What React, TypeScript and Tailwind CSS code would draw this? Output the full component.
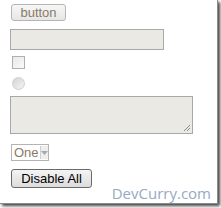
import React from "react";

export default function App() {
  return (
    <div className="w-[221px] h-[208px] bg-white relative overflow-hidden" style={{ fontFamily: "Tahoma, 'DejaVu Sans', 'Liberation Sans', sans-serif" }}>
      <div className="w-[218px] h-[204px] bg-white shadow-[2px_2px_3px_rgba(0,0,0,0.75)] border-r border-b border-[#8a8a8a] flex flex-col items-start pl-[10px]">
        <button className="mt-[4px] ml-[1px] w-[55px] h-[17px] border border-[#b5b5b5] rounded-[3px] bg-gradient-to-b from-[#f7f7f7] to-[#e6e6e6] text-[13px] leading-none text-[#8a7a66] flex items-center justify-center" style={{ fontFamily: "'Liberation Sans', Arial, sans-serif" }}>
          button
        </button>
        <div className="mt-[8px] w-[154px] h-[21px] border border-[#a8a8a8] bg-[#ebe9e3]" />
        <div className="mt-[6px] ml-[2px] w-[13px] h-[13px] border border-[#b0b0b0] bg-gradient-to-br from-[#e8e8e8] to-[#fafafa]" />
        <div className="mt-[8px] ml-[2px] w-[13px] h-[13px] rounded-full border border-[#d0d0d0] bg-gradient-to-br from-[#d4d4d4] to-[#f4f4f4]" />
        <div className="mt-[6px] w-[183px] h-[38px] border border-[#a8a8a8] bg-[#ebe9e3] relative">
          <svg className="absolute right-[1px] bottom-[1px]" width="9" height="9" viewBox="0 0 9 9">
            <line x1="8" y1="2" x2="2" y2="8" stroke="#8a8a8a" strokeWidth="1" />
            <line x1="8" y1="5" x2="5" y2="8" stroke="#8a8a8a" strokeWidth="1" />
          </svg>
        </div>
        <div className="mt-[10px] ml-[1px] h-[17px] w-[38px] border border-[#b4b4b4] bg-white flex items-stretch" style={{ fontFamily: "'Liberation Sans', Arial, sans-serif" }}>
          <span className="flex-1 text-[13px] leading-[15px] text-[#8a7a66] pl-[2px]">One</span>
          <span className="w-[14px] border-l border-[#d0d0d0] bg-[#eeeeee] flex items-center justify-center m-[1px]">
            <svg width="7" height="4" viewBox="0 0 7 4"><path d="M0 0 H7 L3.5 4 Z" fill="#a8a8a8" /></svg>
          </span>
        </div>
        <button className="mt-[8px] ml-[1px] w-[81px] h-[19px] border border-[#6a6a6a] rounded-[3px] bg-gradient-to-b from-[#f4f4f4] to-[#dcdcdc] text-[13px] leading-none text-black flex items-center justify-center" style={{ fontFamily: "'Liberation Sans', Arial, sans-serif" }}>
          Disable All
        </button>
        <div className="self-end mr-[6px] -mt-[3px] text-[15px] leading-[17px] text-[#98a9c2]" style={{ fontFamily: "'Open Sans', 'Noto Sans', sans-serif" }}>
          DevCurry.com
        </div>
      </div>
    </div>
  );
}
